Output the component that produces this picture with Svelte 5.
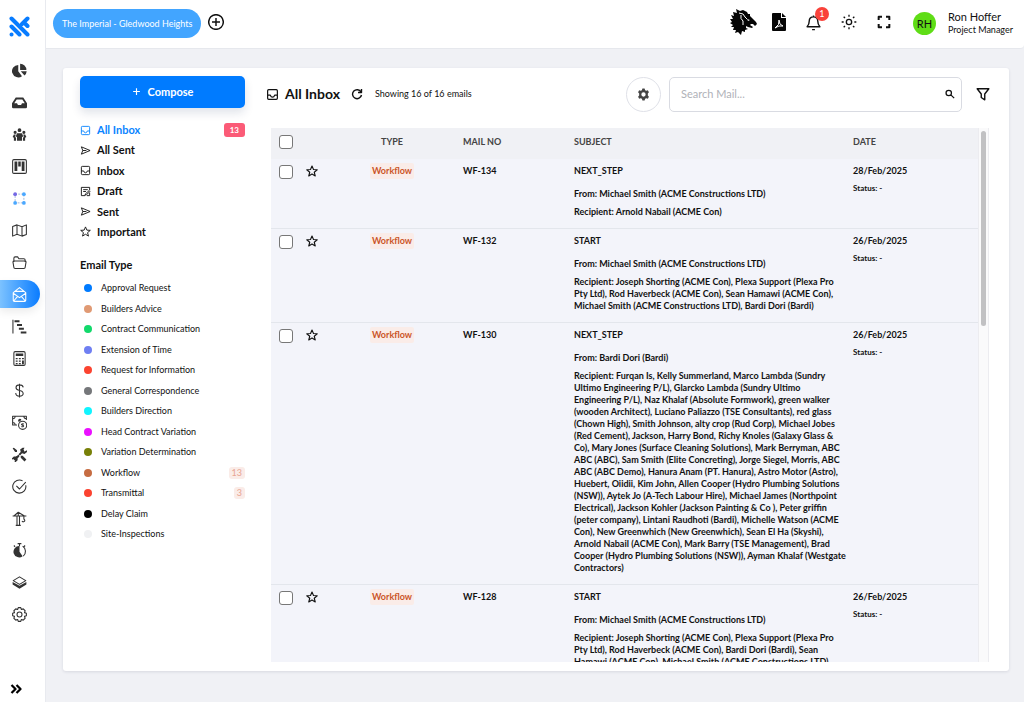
<script>
    // line = stroked path, solid = filled path, all on a 24x24 grid
    const icons = {
        pie: { solid: 'M10 3v10l6 8A10 10 0 1 1 10 3z M13 1a10 10 0 0 1 10 10H13z M14 13h9.500a10 10 0 0 1-3.500 7z' },
        tray: { solid: 'M6 4h12l6 9v6a2 2 0 0 1-2 2H2a2 2 0 0 1-2-2v-6zM7.500 7 3.500 13H8l1.500 3h5l1.500-3h4.500l-4-6z' },
        people: {
            solid: 'M12 2a3 3 0 1 1 0 6 3 3 0 0 1 0-6z M5 6a2 2 0 1 1 0 5 2 2 0 0 1 0-5z M19 6a2 2 0 1 1 0 5 2 2 0 0 1 0-5z M8 10h8l2 5-2 1v6H8v-6l-2-1z M3 12h3l-1 4 1.500 1v5H3v-5l-2-1z M18 12h3l2 4-2 1v5h-3.500v-5l1.500-1z'
        },
        board: { line: 'M3 1h18q2 0 2 2v18q0 2-2 2H3q-2 0-2-2V3q0-2 2-2z', solid: 'M4 4h4.500v15H4z M10 4h4v8h-4z M15.500 4H20v15h-4.500z' },
        map: { line: 'M1 5.500 8 3l8 3 7-3v15.500L16 21l-8-3-7 3z M8 3v15 M16 6v15' },
        folder: { line: 'M3 11V5q0-2 2-2h4l2 3h8q2 0 2 2v3 M3 20 1.500 11q0-1.500 2-1.500h17q2 0 2 1.500L21 20q0 1.500-2 1.500H5q-2 0-2-1.500z' },
        mail: { line: 'M2 9 12 1l10 8v12q0 2-2 2H4q-2 0-2-2z M2 10l10 7 10-7 M5 7h14 M3 22l6-7 M21 22l-6-7' },
        gantt: { line: 'M1.500 1v22', solid: 'M4 2h8v3H4z M8 8h8v3H8z M11 14h8v3h-8z M14 20h9v3h-9z' },
        calc: {
            line: 'M5 1h14q2 0 2 2v18q0 2-2 2H5q-2 0-2-2V3q0-2 2-2z',
            solid: 'M6 4h12v4H6z M6 11h3v2H6z M11 11h3v2h-3z M16 11h3v2h-3z M6 15h3v2H6z M11 15h3v2h-3z M16 15h3v6h-3z M6 19h3v2H6z M11 19h3v2h-3z'
        },
        dollar: { line: 'M12 1v22 M18 7c-.500-3-3-4-6-4-7 0-7.500 7-1 8.500 9 1.500 9 9.500 1 9.500-4 0-6-2-6-5' },
        cash: { line: 'M8 16H1V2h22v6 M1 6q4 0 4-4 M23 6q-4 0-4-4 M1 12q4 0 4 4 M17 10a6.500 6.500 0 1 1 0 13 6.500 6.500 0 0 1 0-13z M19 14.500c-4-1-5 1-2 2s1 3-2 2', solid: 'M12 6q3 0 3 2l-4 3q-3-3 1-5z' },
        tools: { line: 'M3 21 19 5', solid: 'M1 2l2-1 5 4 0 3 6 6 3 0 6 6-3 3-6-6 0-3-6-6-3 0z M17 1l3 0-2 4 2 2 4-2 0 3-4 3-4-1-3 3-2-2 3-3-1-4z M10 13l2 2-3 3 0 3-3 3-2 0 1-3-2-2-3 1 0-2 3-3 3 0z' },
        check: { line: 'M22 10A10.500 10.500 0 1 1 17 3 M7 11l5 5L22 5' },
        crane: { line: 'M8 8v14 M12 8v14 M6 23h8 M1 8h22 M3 8l7-6 10 6 M10 2v6 M19 8v5q3 2 0 4-2 1-3-1' },
        clock: { line: 'M17 5a10 10 0 0 1 1 16 M9 1h6 M12 1v4 M3 4l2 2 M21 4l-2 2', solid: 'M12 5v9l5 7A9 9 0 1 1 12 5z' },
        layers: { line: 'M12 3 22 9l-10 6L2 9z', solid: 'M1 11l11 6 11-6v4l-11 7L1 15z' },
        cog: {
            line: 'M10 1h4l1 3 3-1 3 3-1 3 3 1v4l-3 1 1 3-3 3-3-1-1 3h-4l-1-3-3 1-3-3 1-3-3-1v-4l3-1-1-3 3-3 3 1z M12 8a4 4 0 1 1 0 8 4 4 0 0 1 0-8z'
        },
        inbox: { line: 'M5 3h14q2 0 2 2v14q0 2-2 2H5q-2 0-2-2V5q0-2 2-2z M3 13h5q1 4 4 4t4-4h5' },
        send: { line: 'M3 4l19 8-19 8 3-8z M6 12h8' },
        draft: { line: 'M21 9V3H3v18h8 M21 15v6h-6 M7 8h10 M7 12h6 M12 17l8-7 2 2-8 7-3 1z' },
        star: { line: 'M12 2l3 7 7.500.500-6 5 2 7.500-6.500-4-6.500 4 2-7.500-6-5L9 9z' },
        refresh: { line: 'M20 8A9 9 0 1 0 21 14 M21 2v7h-7' },
        search: { line: 'M9 3a6.500 6.500 0 1 1 0 13 6.500 6.500 0 0 1 0-13z M14 14l8 8' },
        filter: { line: 'M2 3h20l-7 9v10l-6-4v-6z' },
        plus: { line: 'M12 3v18 M3 12h18' },
        addCircle: { line: 'M12 1a11 11 0 1 1 0 22 11 11 0 0 1 0-22z M12 6v12 M6 12h12' },
        bell: { line: 'M3 18q3-3 3-8c0-8 12-8 12 0q0 5 3 8z M12 2v2 M10 22h4' },
        sun: { line: 'M12 8a4 4 0 1 1 0 8 4 4 0 0 1 0-8z M12 1v3 M12 20v3 M1 12h3 M20 12h3 M4 4l2 2 M18 18l2 2 M20 4l-2 2 M4 20l2-2' },
        expand: { line: 'M4 9V4h5 M15 4h5v5 M20 15v5h-5 M9 20H4v-5' },
        gear: {
            solid: 'M10 1h4l1 3 2 1 3-1 2 4-2 2v4l2 2-2 4-3-1-2 1-1 3h-4l-1-3-2-1-3 1-2-4 2-2v-4L2 8l2-4 3 1 2-1zM12 8a4 4 0 1 0 0 8 4 4 0 0 0 0-8z'
        },
        chevrons: { line: 'M3 4l8 8-8 8 M13 4l8 8-8 8' }
    }

    const modules = [
        ['pie', 'Dashboard'], ['tray', 'Documents'], ['people', 'Team'], ['board', 'Board'],
        ['flow', 'Workflows'], ['map', 'Plans'], ['folder', 'Files'], ['mail', 'Mail'],
        ['gantt', 'Schedule'], ['calc', 'Estimates'], ['dollar', 'Finance'], ['cash', 'Payments'],
        ['tools', 'Tools'], ['check', 'Quality'], ['crane', 'Site'], ['clock', 'Timesheets'],
        ['layers', 'Layers'], ['cog', 'Settings']
    ]

    const folders = [
        { name: 'All Inbox', icon: 'inbox', count: 13 },
        { name: 'All Sent', icon: 'send' },
        { name: 'Inbox', icon: 'inbox' },
        { name: 'Draft', icon: 'draft' },
        { name: 'Sent', icon: 'send' },
        { name: 'Important', icon: 'star' }
    ]

    const types = [
        { name: 'Approval Request', color: '#007bff' },
        { name: 'Builders Advice', color: '#e09a74' },
        { name: 'Contract Communication', color: '#12d96b' },
        { name: 'Extension of Time', color: '#6f7ff2' },
        { name: 'Request for Information', color: '#fb4330' },
        { name: 'General Correspondence', color: '#75777a' },
        { name: 'Builders Direction', color: '#10f4ff' },
        { name: 'Head Contract Variation', color: '#ea10ff' },
        { name: 'Variation Determination', color: '#788008' },
        { name: 'Workflow', color: '#c66c42', count: 13 },
        { name: 'Transmittal', color: '#fb4330', count: 3 },
        { name: 'Delay Claim', color: '#000000' },
        { name: 'Site-Inspections', color: '#f0f1f3' }
    ]

    const mails = [
        { no: 'WF-134', subject: 'NEXT_STEP', date: '28/Feb/2025', from: 'Michael Smith (ACME Constructions LTD)', to: 'Arnold Nabail (ACME Con)' },
        { no: 'WF-132', subject: 'START', date: '26/Feb/2025', from: 'Michael Smith (ACME Constructions LTD)', to: 'Joseph Shorting (ACME Con), Plexa Support (Plexa Pro Pty Ltd), Rod Haverbeck (ACME Con), Sean Hamawi (ACME Con), Michael Smith (ACME Constructions LTD), Bardi Dori (Bardi)' },
        { no: 'WF-130', subject: 'NEXT_STEP', date: '26/Feb/2025', from: 'Bardi Dori (Bardi)', to: 'Furqan Is, Kelly Summerland, Marco Lambda (Sundry Ultimo Engineering P/L), Glarcko Lambda (Sundry Ultimo Engineering P/L), Naz Khalaf (Absolute Formwork), green walker (wooden Architect), Luciano Paliazzo (TSE Consultants), red glass (Chown High), Smith Johnson, alty crop (Rud Corp), Michael Jobes (Red Cement), Jackson, Harry Bond, Richy Knoles (Galaxy Glass & Co), Mary Jones (Surface Cleaning Solutions), Mark Berryman, ABC ABC (ABC), Sam Smith (Elite Concreting), Jorge Siegel, Morris, ABC ABC (ABC Demo), Hanura Anam (PT. Hanura), Astro Motor (Astro), Huebert, Oiidii, Kim John, Allen Cooper (Hydro Plumbing Solutions (NSW)), Aytek Jo (A-Tech Labour Hire), Michael James (Northpoint Electrical), Jackson Kohler (Jackson Painting & Co ), Peter griffin (peter company), Lintani Raudhoti (Bardi), Michelle Watson (ACME Con), New Greenwhich (New Greenwhich), Sean El Ha (Skyshi), Arnold Nabail (ACME Con), Mark Barry (TSE Management), Brad Cooper (Hydro Plumbing Solutions (NSW)), Ayman Khalaf (Westgate Contractors)' },
        { no: 'WF-128', subject: 'START', date: '26/Feb/2025', from: 'Michael Smith (ACME Constructions LTD)', to: 'Joseph Shorting (ACME Con), Plexa Support (Plexa Pro Pty Ltd), Rod Haverbeck (ACME Con), Bardi Dori (Bardi), Sean Hamawi (ACME Con), Michael Smith (ACME Constructions LTD)' }
    ]

    let activeModule = $state('mail')
    let activeFolder = $state('All Inbox')
    let search = $state('')
    let selected = $state([])

    function toggleAll(e) {
        selected = e.currentTarget.checked ? mails.map((m) => m.no) : []
    }
</script>

{#snippet icon(name, size, width = 2)}
    <svg class="icon" viewBox="0 0 24 24" width={size} height={size} aria-hidden="true">
        {#if icons[name].solid}
            <path d={icons[name].solid} fill="currentColor" fill-rule="evenodd" />
        {/if}
        {#if icons[name].line}
            <path d={icons[name].line} fill="none" stroke="currentColor" stroke-width={width} stroke-linejoin="round" />
        {/if}
    </svg>
{/snippet}

<div class="app">
    <aside class="sidebar">
        <a class="logo" href="#home" aria-label="Home">
            <svg viewBox="0 0 21 21" width="21" height="21" fill="none" stroke="#087cff" stroke-width="4" stroke-linecap="round">
                <path d="M2.500 2.500 18.500 18.500 M2.500 10.500l8 8 M13 8l5.500-5.500 M15 6.500l3.500 3.500 M2.500 18.500h.1" />
            </svg>
        </a>
        <nav class="modules">
            {#each modules as [name, label]}
                <a href="#{name}" class="module" class:active={activeModule === name} aria-label={label} onclick={() => (activeModule = name)}>
                    {#if name === 'flow'}
                        <svg viewBox="0 0 24 24" width="15" height="15">
                            <path d="M5 5h14v14H5z" fill="none" stroke="#9fb4d8" stroke-width="1.500" stroke-dasharray="3 2" />
                            <circle cx="5" cy="5" r="3" fill="#7468e4" />
                            <circle cx="19" cy="5" r="3" fill="#4aa8ff" />
                            <circle cx="5" cy="19" r="3" fill="#4aa8ff" />
                            <circle cx="19" cy="19" r="3" fill="#4aa8ff" />
                        </svg>
                    {:else}
                        {@render icon(name, 15, 1.7)}
                    {/if}
                </a>
            {/each}
        </nav>
        <button class="expand" aria-label="Expand menu">{@render icon('chevrons', 12, 4.5)}</button>
    </aside>

    <div class="page">
        <header class="topbar">
            <button class="project">The Imperial - Gledwood Heights</button>
            <button class="plain add" aria-label="Add project">{@render icon('addCircle', 16, 2.2)}</button>
            <div class="tools">
                <button class="plain" aria-label="Assistant">
                    <svg viewBox="0 0 27 26" width="27" height="26">
                        <path
                            d="M6 0 10 2 13 1 17 3 18 5 20 5 20 7 22 9 26 13 27 15 25 17 23 15 21 15 20 16 23 18 22 19 18 18 16 17 16 19 18 20 15 21 15 23 12 22 11 26 8 23 5 24 6 21 3 21 4 18 1 18 3 16 0 14 2 13 0 10 3 10 1 6 4 7 3 3 7 4z"
                            fill="#050505"
                        />
                        <path d="M9 4q5 0 6 4l2 2 M11 6q-1 4 2 6l0 4" fill="none" stroke="#fff" stroke-width="1" />
                        <path d="M17 10l3 1-2 1z" fill="#fff" />
                    </svg>
                </button>
                <button class="plain" aria-label="Export PDF">
                    <svg viewBox="0 0 14 18" width="14" height="18">
                        <path d="M1 0h8v5h5v12q0 1-1 1H1q-1 0-1-1V1q0-1 1-1z M10 0l4 4h-4z" fill="#050505" />
                        <path d="M3 15q5-3 4-8 0 5 4 6-4-1-8 2z" fill="none" stroke="#fff" stroke-width="1" />
                    </svg>
                </button>
                <button class="plain bell" aria-label="Notifications">
                    {@render icon('bell', 17, 2)}
                    <span class="alert">1</span>
                </button>
                <button class="plain" aria-label="Theme">{@render icon('sun', 16, 2)}</button>
                <button class="plain" aria-label="Full screen">{@render icon('expand', 16, 3)}</button>
            </div>
            <span class="avatar">RH</span>
            <div class="user">
                <span class="user-name">Ron Hoffer</span>
                <span>Project Manager</span>
            </div>
        </header>

        <main class="card">
            <section class="folders">
                <button class="compose">{@render icon('plus', 9, 3)} Compose</button>
                <ul class="folder-list">
                    {#each folders as folder}
                        <li>
                            <a href="#folder" class:current={activeFolder === folder.name} onclick={() => (activeFolder = folder.name)}>
                                {@render icon(folder.icon, 11, 2)}
                                <span class="label">{folder.name}</span>
                                {#if folder.count}<span class="count">{folder.count}</span>{/if}
                            </a>
                        </li>
                    {/each}
                </ul>
                <h2>Email Type</h2>
                <ul class="type-list">
                    {#each types as type}
                        <li>
                            <a href="#type">
                                <span class="dot" style="background: {type.color}"></span>
                                <span class="label">{type.name}</span>
                                {#if type.count}<span class="type-count">{type.count}</span>{/if}
                            </a>
                        </li>
                    {/each}
                </ul>
            </section>

            <section class="inbox">
                <div class="inbox-head">
                    {@render icon('inbox', 13, 2.2)}
                    <h1>{activeFolder}</h1>
                    <button class="plain" aria-label="Refresh">{@render icon('refresh', 12, 2.8)}</button>
                    <span class="showing">Showing 16 of 16 emails</span>
                    <button class="round" aria-label="Mail settings">{@render icon('gear', 13)}</button>
                    <label class="search">
                        <input type="text" placeholder="Search Mail..." aria-label="Search Mail" bind:value={search} />
                        {@render icon('search', 10, 3)}
                    </label>
                    <button class="plain" aria-label="Filter">{@render icon('filter', 14, 2.4)}</button>
                </div>

                <div class="list">
                    <div class="scroller">
                        <table>
                            <colgroup>
                                <col class="c-check" />
                                <col class="c-star" />
                                <col class="c-type" />
                                <col class="c-no" />
                                <col />
                                <col class="c-date" />
                            </colgroup>
                            <thead>
                                <tr>
                                    <th class="check"><input type="checkbox" aria-label="Select all" onchange={toggleAll} /></th>
                                    <th></th>
                                    <th class="type">TYPE</th>
                                    <th>MAIL NO</th>
                                    <th>SUBJECT</th>
                                    <th class="date">DATE</th>
                                </tr>
                            </thead>
                            <tbody>
                                {#each mails as mail}
                                    <tr>
                                        <td class="check"><input type="checkbox" aria-label="Select {mail.no}" value={mail.no} bind:group={selected} /></td>
                                        <td class="star"><button class="plain" aria-label="Mark {mail.no} important">{@render icon('star', 12, 2.2)}</button></td>
                                        <td class="type"><span class="tag">Workflow</span></td>
                                        <td>{mail.no}</td>
                                        <td>
                                            <div>{mail.subject}</div>
                                            <div class="from">From: {mail.from}</div>
                                            <div class="to">Recipient: {mail.to}</div>
                                        </td>
                                        <td class="date">
                                            <div>{mail.date}</div>
                                            <div class="status">Status: -</div>
                                        </td>
                                    </tr>
                                {/each}
                            </tbody>
                        </table>
                    </div>
                    <div class="track"><div class="thumb"></div></div>
                </div>
            </section>
        </main>
    </div>
</div>

<style>
    :global(body) {
        margin: 0;
        background: #f0f1f5;
    }

    .app {
        display: flex;
        height: 100vh;
        font-family: Lato, sans-serif;
        font-size: 9px;
        line-height: 12px;
        color: #111;
    }

    .app * {
        box-sizing: border-box;
    }

    button, input {
        font-family: inherit;
    }

    a {
        color: inherit;
        text-decoration: none;
    }

    ul {
        list-style: none;
        margin: 0;
        padding: 0;
    }

    .icon {
        display: block;
        flex: none;
    }

    .plain {
        border: none;
        background: none;
        padding: 0;
        color: #111;
        display: flex;
        cursor: pointer;
    }

    /* left rail */
    .sidebar {
        width: 46px;
        flex: none;
        background: #fff;
        border-right: 1px solid #e8eaef;
        display: flex;
        flex-direction: column;
    }

    .logo {
        padding: 16px 0 17px 9px;
        display: flex;
    }

    .module {
        height: 32px;
        display: flex;
        align-items: center;
        color: #333;
    }

    .module .icon, .module svg {
        margin-left: 12px;
    }

    .module.active {
        width: 40px;
        height: 28px;
        margin: 2px 0;
        border-radius: 0 14px 14px 0;
        background: linear-gradient(90deg, #7cc2ff, #0a7cff);
        box-shadow: 0 4px 8px rgba(0, 0, 0, 0.08);
        color: #fff;
    }

    .expand {
        margin-top: auto;
        padding: 7px 10px;
        border: none;
        background: none;
        color: #000;
        display: flex;
    }

    .page {
        flex: 1;
        min-width: 0;
        display: flex;
        flex-direction: column;
    }

    .topbar {
        height: 49px;
        flex: none;
        background: #fff;
        border-bottom: 1px solid #e6e8ed;
        border-radius: 0 0 4px 0;
        padding: 0 11px 2px 7px;
        display: flex;
        align-items: center;
    }

    .project {
        border: none;
        border-radius: 15px;
        height: 29px;
        padding: 0 9px;
        background: #42a5ff;
        color: #fff;
        font-size: 9px;
    }

    .add {
        margin-left: 7px;
        margin-bottom: 2px;
    }

    .tools {
        margin-left: auto;
        margin-right: 21px;
        margin-bottom: 2px;
        display: flex;
        align-items: center;
        gap: 19px;
    }

    .tools .plain:first-child {
        margin-right: -4px;
    }

    .bell {
        position: relative;
    }

    .alert {
        position: absolute;
        top: -7px;
        right: -7px;
        width: 14px;
        height: 14px;
        border-radius: 50%;
        background: #f9423a;
        color: #fff;
        font-size: 9px;
        line-height: 14px;
        text-align: center;
    }

    .avatar {
        width: 23px;
        height: 23px;
        border-radius: 50%;
        background: #5fdd16;
        line-height: 23px;
        font-size: 11px;
        text-align: center;
        margin-right: 12px;
    }

    .user {
        display: flex;
        flex-direction: column;
        gap: 1px;
    }

    .user-name {
        font-size: 11px;
    }

    /* mail card */
    .card {
        flex: 1;
        min-height: 0;
        margin: 19px 15px 31px 17px;
        background: #fff;
        border-radius: 3px;
        box-shadow: 0 1px 3px rgba(40, 50, 80, 0.12);
        display: flex;
        padding: 8px 19px 9px 17px;
    }

    .folders {
        width: 165px;
        flex: none;
    }

    .compose {
        width: 100%;
        height: 32px;
        padding: 0 0 2px;
        border: none;
        border-radius: 5px;
        background: #007bff;
        box-shadow: 0 5px 10px rgba(0, 30, 80, 0.12);
        color: #fff;
        font-size: 11px;
        font-weight: 700;
        display: flex;
        align-items: center;
        justify-content: center;
        gap: 7px;
    }

    .folder-list, .type-list {
        display: flex;
        flex-direction: column;
        justify-content: space-between;
    }

    .folder-list {
        min-height: 122px;
        margin-top: 12px;
        font-size: 11px;
        font-weight: 700;
    }

    .type-list {
        min-height: 266px;
    }

    .folder-list a, .type-list a {
        height: 20px;
        display: flex;
        align-items: center;
    }

    .folder-list a {
        gap: 6px;
    }

    .current {
        color: #0a84ff;
    }

    .label {
        flex: 1;
    }

    .count {
        background: #fb5b77;
        color: #fff;
        border-radius: 3px;
        padding: 1px 6px;
        font-size: 8px;
    }

    h2 {
        margin: 17px 0 7px;
        font-size: 11px;
        line-height: 12px;
    }

    .dot {
        width: 8px;
        height: 8px;
        border-radius: 50%;
        margin: 0 9px 0 4px;
    }

    .type-count {
        background: #faece8;
        color: #e8a493;
        border-radius: 3px;
        padding: 0 3px;
    }

    .inbox {
        flex: 1;
        min-width: 0;
        margin-left: 21px;
        display: flex;
        flex-direction: column;
    }

    .inbox-head {
        display: flex;
        align-items: center;
        height: 36px;
    }

    h1 {
        margin: 0 11px 0 6px;
        font-size: 14px;
        line-height: 18px;
    }

    .showing {
        margin-left: 12px;
    }

    .round {
        margin-left: auto;
        width: 35px;
        height: 35px;
        border: 1px solid #dfe1e8;
        border-radius: 50%;
        background: #fff;
        color: #444;
        display: flex;
        align-items: center;
        justify-content: center;
    }

    .search {
        width: 293px;
        height: 35px;
        margin: 0 14px 0 8px;
        padding: 0 6px 0 11px;
        border: 1px solid #d9dbe2;
        border-radius: 5px;
        display: flex;
        align-items: center;
    }

    .search input {
        flex: 1;
        min-width: 0;
        padding: 0 0 2px;
        border: none;
        outline: none;
        font-size: 11px;
    }

    .search input::placeholder {
        color: #b0b2b8;
    }

    .list {
        flex: 1;
        min-height: 0;
        margin: 16px 1px 0 5px;
        display: flex;
    }

    .scroller {
        flex: 1;
        overflow-y: auto;
        scrollbar-width: none;
        background: #f3f4fa;
    }

    table {
        width: 100%;
        table-layout: fixed;
        border-collapse: separate;
        border-spacing: 0;
    }

    .c-check {
        width: 28px;
    }

    .c-star {
        width: 36px;
    }

    .c-type {
        width: 114px;
    }

    .c-no {
        width: 111px;
    }

    .c-date {
        width: 129px;
    }

    th {
        height: 31px;
        padding: 0 0 4px 14px;
        background: #f0f1f5;
        color: #444;
        font-weight: 700;
        text-align: left;
    }

    td {
        padding: 6px 0 10px 14px;
        border-bottom: 1px solid #e3e6ec;
        font-weight: 700;
        vertical-align: top;
    }

    th.check, td.check {
        padding-left: 8px;
    }

    th.type, td.type {
        padding-left: 0;
        text-align: center;
    }

    th.date, td.date {
        padding-left: 4px;
    }

    td.star {
        padding-left: 7px;
    }

    .check input {
        appearance: none;
        display: block;
        width: 14px;
        height: 14px;
        margin: 0;
        border: 1px solid #777;
        border-radius: 3px;
        background: #fff;
    }

    .check input:checked {
        background: #007bff;
    }

    .tag {
        display: inline-block;
        padding: 2px;
        margin-top: -2px;
        background: #faece8;
        color: #cb5527;
        border-radius: 2px;
    }

    .from {
        margin-top: 11px;
    }

    .to {
        margin-top: 6px;
    }

    .status {
        margin-top: 5px;
        font-size: 8px;
    }

    .track {
        width: 11px;
        padding: 3px 2px;
        background: #fafafb;
        border: 1px solid #ececf0;
        border-width: 0 1px;
    }

    .thumb {
        height: 37%;
        border-radius: 4px;
        background: #c1c1c3;
    }
</style>
